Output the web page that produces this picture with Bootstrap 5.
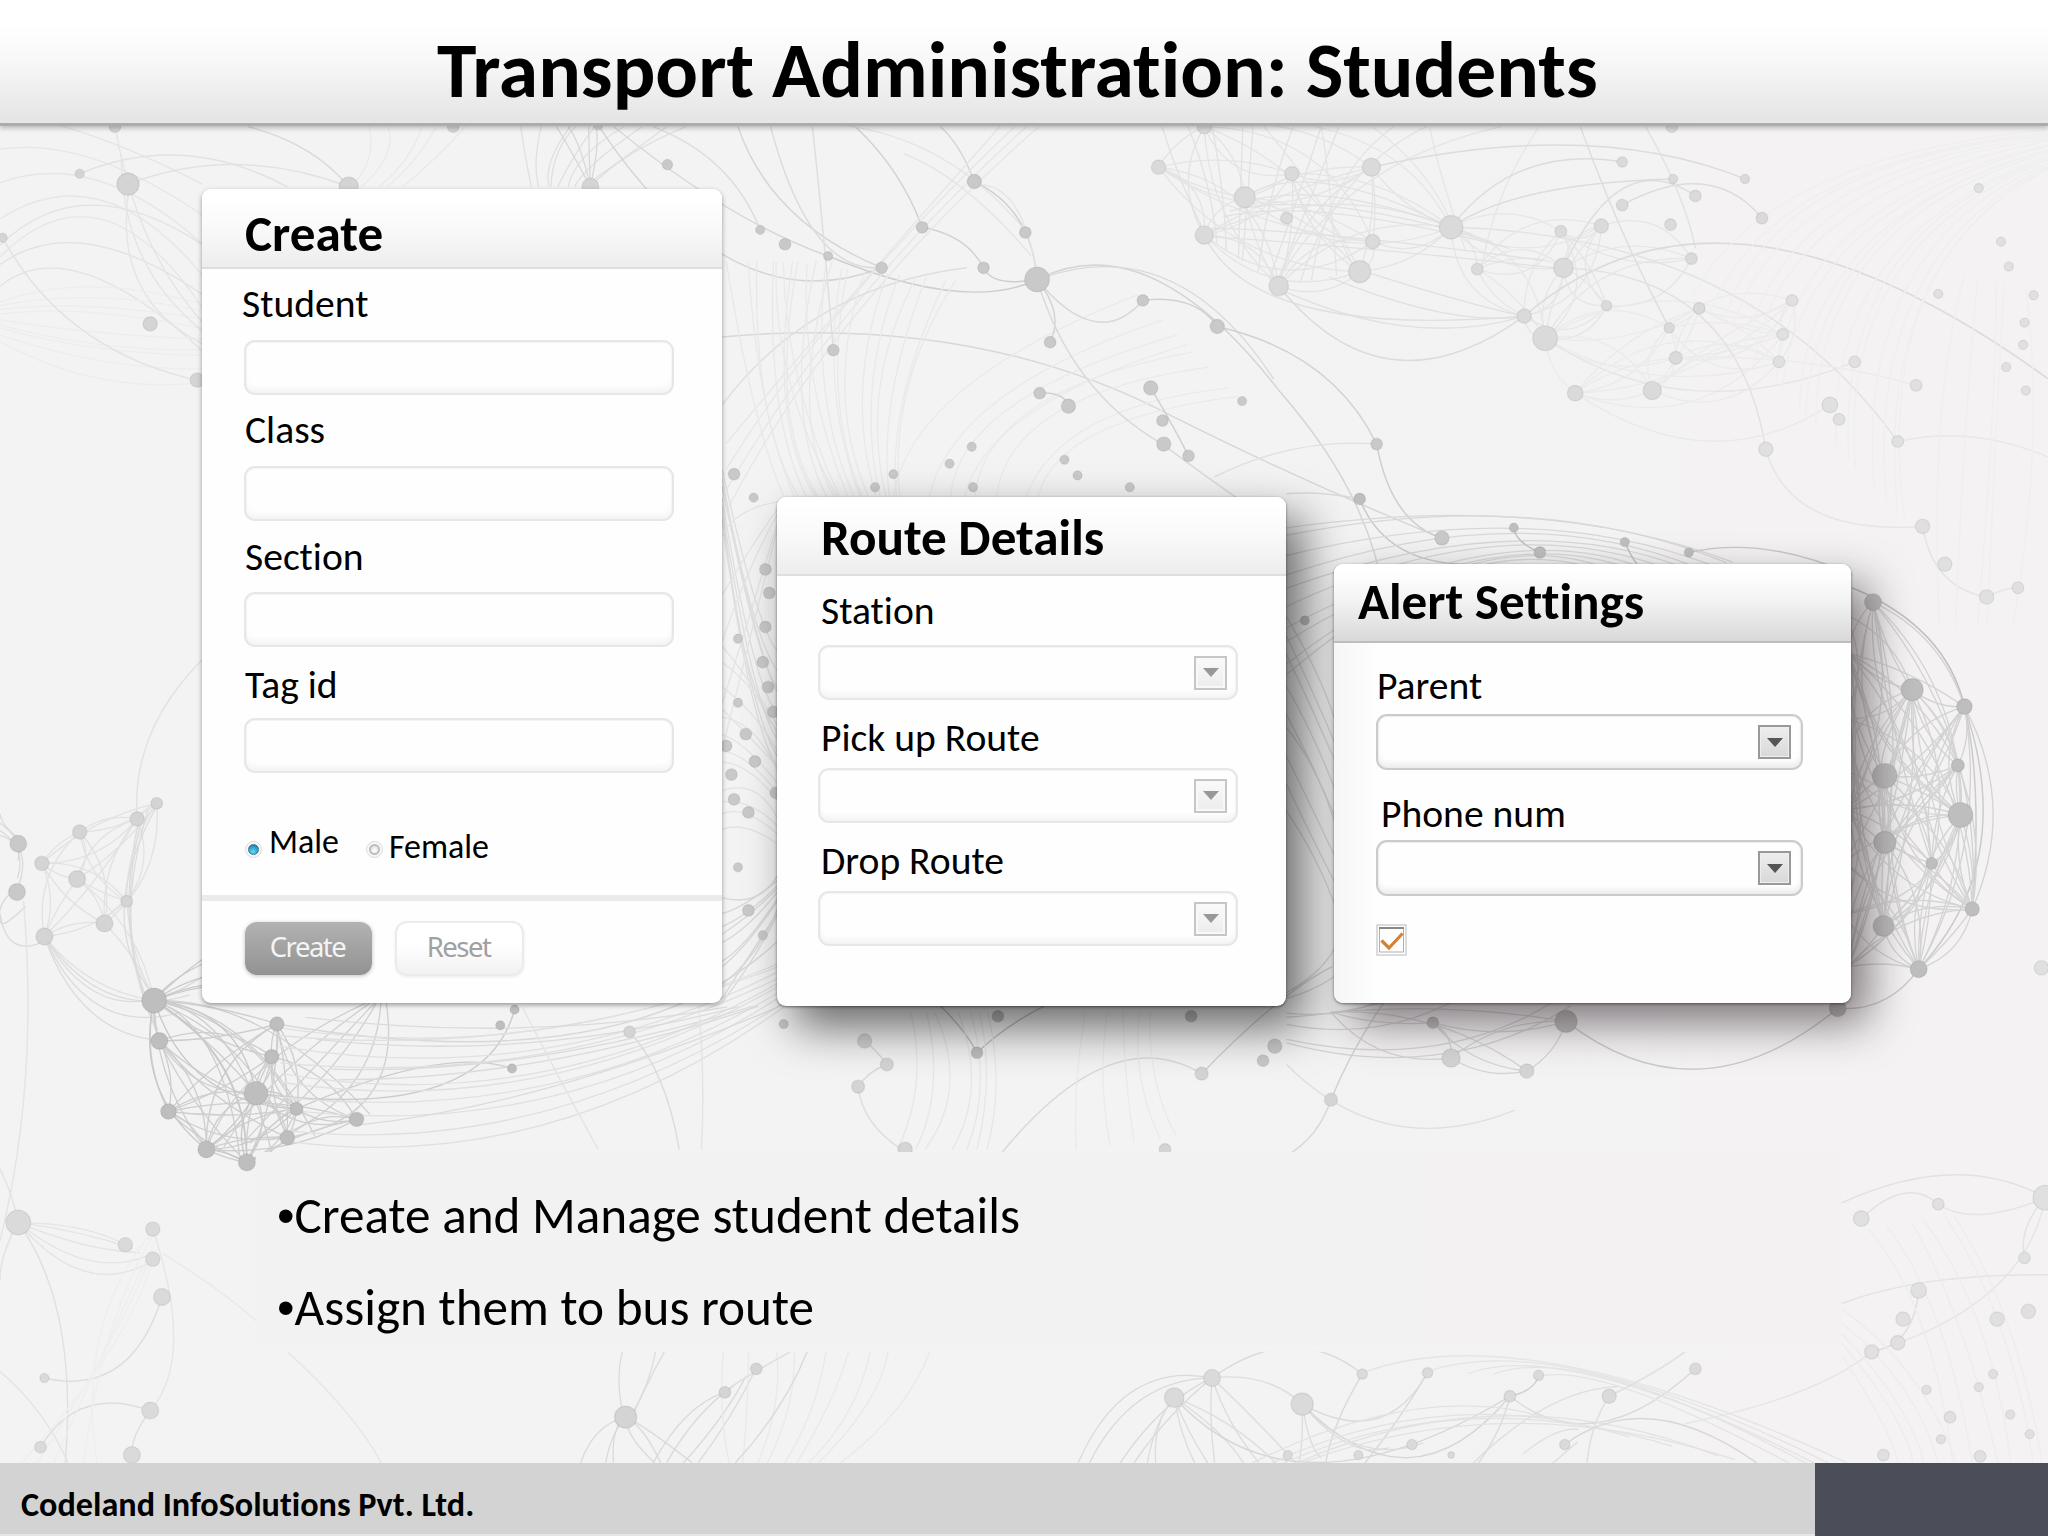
<!DOCTYPE html>
<html lang="en">
<head>
<meta charset="utf-8">
<title>Transport Administration: Students</title>
<link rel="stylesheet" href="https://cdn.jsdelivr.net/npm/bootstrap@5.3.0/dist/css/bootstrap.min.css">
<style>
body{width:2048px;height:1536px;overflow:hidden;background:linear-gradient(90deg,#f3f3f3 60%,#f4f2f3 85%);color:#000;font-family:Carlito,Calibri,Lato,sans-serif;font-variant-ligatures:none}
.backdrop{position:absolute;inset:0;width:2048px;height:1536px;z-index:-1}
.page-head{height:126px;background:linear-gradient(#fff 20%,#f8f8f8 48%,#e6e6e6 95%);border-bottom:3px solid #acacac;box-shadow:0 2px 5px rgba(0,0,0,.25);padding-left:437px}
.page-head h1{font-size:79.6px;font-weight:700;line-height:96px;padding-top:22px;white-space:nowrap}
.panels{height:877px;padding-left:202px}
.panel{background:#fefefe;border-radius:9px;flex:none}
.panel-title{font-size:51.2px;font-weight:700;line-height:60px;margin:0;white-space:nowrap;background:linear-gradient(#fff 10%,#f9f9f9 50%,#ededed);border-bottom:2px solid #dedede;border-radius:9px 9px 0 0}
.panel-create{width:520px;height:814px;box-shadow:0 2px 5px rgba(0,0,0,.38)}
.panel-create .panel-title{height:80px;padding:15px 0 0 43px}
.panel-route{width:509px;height:509px;margin-left:55px;margin-bottom:-3px;box-shadow:17px 21px 46px rgba(0,0,0,.58),0 1px 3px rgba(0,0,0,.5)}
.panel-route .panel-title{height:79px;padding:11px 0 0 44px}
.panel-alert{width:517px;height:439px;margin-left:48px;background:linear-gradient(90deg,#f6f6f6,#fefefe 9%);box-shadow:17px 20px 44px rgba(40,30,35,.58),0 1px 3px rgba(0,0,0,.5)}
.panel-alert .panel-title{height:79px;padding:8px 0 0 24px;background:linear-gradient(#fff 10%,#f4f4f4 45%,#d9d9d9);border-color:#bdbdbd}
.field-label{font-size:39.6px;line-height:48px;white-space:nowrap}
.box{height:55px;border:2px solid #e7e7e7;border-radius:11px;background:#fefefe;box-shadow:inset 0 -6px 6px -2px #f3f3f3,inset 0 0 0 1px #f5f5f5;padding:0}
.panel-create .box{width:430px}
.panel-create .fields{padding:0 0 0 42px}
.fld{height:126px}
.fld-student .field-label{margin:0 0 12px -2px}.fld-class .field-label{margin:0 0 12px 1px}.fld-section .field-label{margin:0 0 11px 1px}.fld-tag .field-label{margin:0 0 9px 1px}
.radios{height:122px;padding:52px 0 0 43px;font-size:33.9px;line-height:42px}
.radio{width:17px;height:17px;border-radius:50%;border:1px solid #dcdcdc;background:#f7f7f7;margin-top:16px;padding:2px}
.radio i{display:block;width:11px;height:11px;border-radius:50%;border:2px solid #bdbdbd;background:radial-gradient(circle at 50% 70%,#fff,#ddd)}
.radio i.on{border:1px solid #3b7189;background:radial-gradient(circle at 45% 75%,#5fdcfb,#2e9bc6 60%,#26698a)}
.lbl-male{margin-left:7px;width:97px;margin-top:-4px}.lbl-female{margin-left:6px;margin-top:1px}
.actions{border-top:6px solid #ebebeb;padding:20px 0 0 43px;gap:23px}
.btn-lite{font-family:"Noto Sans","Open Sans",sans-serif;font-size:27.5px;letter-spacing:-1.5px;line-height:45px;padding:0 2px 5px 0;border-radius:12px}
.btn-make{width:127px;height:53px;margin-top:1px;color:#f4f4f4;background:linear-gradient(#b2b2b2,#929292);border:0;box-shadow:0 1px 4px rgba(0,0,0,.25)}
.btn-clear{width:129px;height:55px;color:#a0a0a0;background:linear-gradient(#fff 40%,#f2f2f2);border:2px solid #ebebeb;box-shadow:0 1px 3px rgba(0,0,0,.08)}
.drop{width:33px;height:34px;border:2px solid #c6c6c6;background:linear-gradient(#fafafa,#ececec);box-shadow:inset 0 0 0 2px #f8f8f8}
.drop::after{content:"";border:8.5px solid transparent;border-top:9px solid #989898;border-bottom:0}
.panel-route .fields{padding:9px 0 0 41px}
.panel-route .field-label{padding-left:3px}
.panel-route .box{width:420px;padding-right:9px}
.panel-route .f1{height:115px}.panel-route .f2{height:123px}.panel-route .f3{height:123px}
.f1 .field-label{margin-bottom:10px}.f2 .field-label{margin-bottom:6px}.f3 .field-label{margin-bottom:6px}
.panel-alert .fields{padding:17px 0 0 42px}
.panel-alert .box{width:427px;height:56px;border-color:#cbcbcb;padding-right:10px;box-shadow:inset 0 -6px 6px -2px #ebebeb,inset 0 0 0 1px #ededed}
.panel-alert .drop{border-color:#999;background:linear-gradient(#eee,#d8d8d8);box-shadow:inset 0 0 0 1px #eee}
.panel-alert .drop::after{border-top-color:#555}
.a1{height:110px}.a2{height:126px}
.a1 .field-label{margin:0 0 4px 1px}.a2 .field-label{margin:0 0 2px 5px}
.tick{width:32px;height:32px;margin-top:28px}
.notes{width:1584px;height:193px;margin:149px 0 0 256px;padding:34px 0 0 21px;background:linear-gradient(90deg,#f2f2f2 60%,#f3f1f2 75%);font-size:51.2px;line-height:60px}
.notes li{height:92px;white-space:nowrap}
.dot{font-family:"Liberation Sans",sans-serif;line-height:1;font-size:50px}
.page-foot{height:73px;margin-top:118px;font-size:34.2px;font-weight:700;line-height:42px;background:#d3d3d3;border-bottom:2px solid #e6e6e6}
.page-foot .who{padding:20px 0 0 21px}
.page-foot .block{width:233px;height:73px;background:#4b4e59}
</style>
<script src="https://cdn.jsdelivr.net/npm/bootstrap@5.3.0/dist/js/bootstrap.bundle.min.js"></script>
</head>
<body class="d-flex flex-column">
<svg class="backdrop" id="net" viewBox="0 0 1568 1176" preserveAspectRatio="none" fill="none"></svg>
<header class="page-head flex-shrink-0"><h1 class="m-0">Transport Administration: Students</h1></header>
<main class="flex-shrink-0">
  <section class="panels d-flex align-items-end">
    <div class="panel panel-create">
      <h2 class="panel-title">Create</h2>
      <div class="fields">
        <div class="fld fld-student d-flex flex-column justify-content-end"><label class="field-label">Student</label><div class="box"></div></div>
        <div class="fld fld-class d-flex flex-column justify-content-end"><label class="field-label">Class</label><div class="box"></div></div>
        <div class="fld fld-section d-flex flex-column justify-content-end"><label class="field-label">Section</label><div class="box"></div></div>
        <div class="fld fld-tag d-flex flex-column justify-content-end"><label class="field-label">Tag id</label><div class="box"></div></div>
      </div>
      <div class="radios d-flex align-items-start">
        <span class="radio"><i class="on"></i></span><span class="lbl-male">Male</span>
        <span class="radio"><i></i></span><span class="lbl-female">Female</span>
      </div>
      <div class="actions d-flex align-items-start"><button class="btn btn-lite btn-make">Create</button><button class="btn btn-lite btn-clear">Reset</button></div>
    </div>
    <div class="panel panel-route">
      <h2 class="panel-title">Route Details</h2>
      <div class="fields">
        <div class="f1 d-flex flex-column justify-content-end"><label class="field-label">Station</label><div class="box d-flex align-items-center justify-content-end"><span class="drop d-flex align-items-center justify-content-center"></span></div></div>
        <div class="f2 d-flex flex-column justify-content-end"><label class="field-label">Pick up Route</label><div class="box d-flex align-items-center justify-content-end"><span class="drop d-flex align-items-center justify-content-center"></span></div></div>
        <div class="f3 d-flex flex-column justify-content-end"><label class="field-label">Drop Route</label><div class="box d-flex align-items-center justify-content-end"><span class="drop d-flex align-items-center justify-content-center"></span></div></div>
      </div>
    </div>
    <div class="panel panel-alert">
      <h2 class="panel-title">Alert Settings</h2>
      <div class="fields">
        <div class="a1 d-flex flex-column justify-content-end"><label class="field-label">Parent</label><div class="box d-flex align-items-center justify-content-end"><span class="drop d-flex align-items-center justify-content-center"></span></div></div>
        <div class="a2 d-flex flex-column justify-content-end"><label class="field-label">Phone num</label><div class="box d-flex align-items-center justify-content-end"><span class="drop d-flex align-items-center justify-content-center"></span></div></div>
        <svg class="tick d-block" viewBox="0 0 32 32"><rect x="1" y="1" width="29" height="30" fill="#fff" stroke="#d0d0d0" stroke-width="1.5"/><rect x="3.500" y="4" width="24" height="24" fill="#fdfdfd" stroke="#b0b0b0"/><path d="M3 4h25" stroke="#888" stroke-width="2"/><path d="M5.500 16.500l7.500 7.500L26.500 9.500" fill="none" stroke="#d9802f" stroke-width="3.200"/></svg>
      </div>
    </div>
  </section>
  <ul class="notes list-unstyled mb-0"><li><span class="dot">•</span>Create and Manage student details</li><li><span class="dot">•</span>Assign them to bus route</li></ul>
</main>
<footer class="page-foot flex-shrink-0 d-flex justify-content-between"><div class="who">Codeland InfoSolutions Pvt. Ltd.</div><div class="block"></div></footer>
<script>
// Decorative network: x, y, radius per node, grouped by tone
const groups = {
 '#d4d4d4': `61,133,4 98,141,9 88,97,5 347,97,5 267,143,8 452,143,7 2,182,4 115,248,6 151,291,6 458,96,4
  120,615,5 105,627,6 61,637,6 32,661,6 59,673,7 97,690,5 80,707,7 34,717,7 482,790,5 662,797,6 679,815,5.500 657,832,5.500 920,822,5.500 1019,842,5.500
  1111,810,7.500 1169,820,6 479,1085,9 579,1048,5 555,1066,5 693,880,6 892,880,5`,
 '#c9c9c9': `511,126,4.500 582,176,4 601,187,5 634,196,4 675,205,5 706,174,5 746,139,6 785,178,5 753,205,5 794,214,10 638,268,5 804,262,5 875,230,5 932,250,6
  796,301,5 818,311,6 881,297,6 890,322,5 891,340,6 910,349,5 951,307,4 815,352,4 825,364,4 865,373,4 1054,340,5 1104,412,6 744,342,4 727,355,4 684,363,4 670,373,4 745,373,4
  562,363,5 577,381,4 586,436,5 589,454,5 586,480,5 565,489,4 584,507,5 588,526,5 592,545,5 565,538,4 571,562,5 556,571,5 578,583,5 594,607,5 560,593,5 562,612,5 573,622,5 565,664,4 573,697,5 584,716,4
  600,784,4 976,801,6 967,812,5 14,646,7 13,683,7`,
 '#dadada': `922,97,6 887,128,6 953,151,8.500 989,133,6 1050,128,7.500 922,180,7.500 985,167,5 1051,185,6 979,219,8 1041,208,9 1111,174,9.500 1131,206,5 1197,205,8 1195,177,5 1226,173,6
  1242,157,5 1242,124,4.500 1281,137,4 1298,150,5 1336,137,4 1349,167,5 1279,172,5 1280,97,5 1295,198,5 1230,234,4.500 1278,251,4.500 1301,236,5 1167,242,6 1183,259,10 1206,301,6.500 1265,299,7.500
  1283,274,5.500 14,936,10 117,941,6 96,953,6 117,964,6 124,993,7 34,1055,4 115,1080,7 31,1108,5 101,1114,7
  928,1055,7 899,1070,8 997,1075,9 1043,1052,4.500 1093,1051,4.500 1178,1053,4.500 1156,1069,5 1232,1069,6 1298,1048,5 1081,1106,4.500 1198,1106,4.500 986,1114,4 1040,1114,4 1111,1114,3`,
 '#e0e0e0': `1372,230,5 1365,256,5 1362,277,5 1420,277,5 1401,310,6.500 1408,321,5 1467,295,5 1352,344,6 1453,338,5 1515,144,4 1532,185,4 1538,204,4 1484,225,4 1557,226,4 1550,247,4 1549,264,4
  1536,281,4 1551,299,4 1472,403,6 1489,432,6 1521,457,6 1545,450,5 1563,741,6 1425,933,6.500 1484,922,5 1566,917,10 1550,963,5 1469,988,6.500 1457,1010,6 1453,1028,6 1433,1035,6 1529,1010,6 1553,1004,6
  1475,1064,4 1526,1052,4 1515,1062,4 1493,1085,5 1539,1083,4 1486,1102,4 1442,1114,5 1516,1115,5 1554,1098,4`,
 '#bebebe': `118,766,10 122,797,7 212,784,6 208,809,6 196,837,9.500 129,851,6.500 227,849,5.500 273,857,6 220,871,6 158,880,7 189,890,7 394,773,4 383,785,4 392,818,4
  748,806,5 764,778,5 912,778,5 1041,382,5 1159,404,4 1179,423,5 1244,415,4 1293,423,4 999,475,4 1199,782,9 1097,783,5 1407,772,7
  1434,461,7 1464,528,9 1504,541,6.500 1443,594,10 1499,586,5.500 1501,624,10 1443,645,9 1479,661,5 1510,696,6 1442,709,8.500 1469,742,7`
};
let svg = '';
const curve = (x1,y1,cx,cy,x2,y2,c,w=1.1) => { svg += `<path d="M${x1} ${y1}Q${cx} ${cy} ${x2} ${y2}" stroke="${c}" stroke-width="${w}"/>`; };
// repeatable variation, so that neighbouring strands are not evenly spaced
let seed = 7; const rnd = () => (seed = (seed*16807)%2147483647)/2147483647;
// a family of curves blended between a first and a last curve
const bundle = (a,b,n,c,w=1) => { for (let i=0;i<n;i++){ const t=(i+rnd()*.9-.45)/(n-1); curve(...a.map((v,k)=>+(v+(b[k]-v)*t+(k>1&&k<4?rnd()*16-8:0)).toFixed(1)),c,w); } };
// arcs among nodes of a cluster
const mesh = (pts,c,bend,limit) => { const p=pts.split(' ').map(s=>s.split(',').map(Number));
 p.forEach((a,i)=>p.forEach((b,j)=>{ if(j<=i) return; const dx=b[0]-a[0],dy=b[1]-a[1]; if(Math.hypot(dx,dy)>limit) return; const s=((i+j)%2?1:-1)*bend*(.3+rnd()*1.3);
 curve(a[0],a[1],+((a[0]+b[0])/2-dy*s).toFixed(1),+((a[1]+b[1])/2+dx*s).toFixed(1),b[0],b[1],c,1); })); };

bundle([0,97,60,100,155,150],[0,190,80,120,155,230],5,'#e6e6e6');
bundle([0,185,60,130,155,180],[0,215,60,170,155,258],3,'#e2e2e2');
bundle([0,230,60,200,155,230],[0,260,80,300,155,290],9,'#ededed');
bundle([98,141,85,220,155,262],[88,97,110,190,155,245],3,'#e4e4e4');
curve(2,182,50,270,155,292,'#e2e2e2'); curve(61,133,140,100,220,143,'#e2e2e2'); curve(98,141,180,110,267,143,'#e2e2e2');
curve(190,97,240,110,267,143,'#dadada'); bundle([285,97,290,120,270,143],[350,97,330,120,305,143],5,'#eaeaea');
bundle([402,97,402,120,408,143],[520,97,470,120,450,143],9,'#e0e0e0');
bundle([430,97,440,115,452,143],[458,97,455,110,452,143],4,'#d8d8d8');
curve(458,96,560,250,675,205,'#d4d4d4'); curve(470,97,560,170,634,196,'#d8d8d8'); curve(500,97,560,120,582,176,'#dcdcdc');
curve(565,97,590,170,675,205,'#d6d6d6'); curve(590,97,620,210,675,205,'#dcdcdc'); curve(622,97,630,170,638,268,'#dedede'); curve(655,97,690,130,706,174,'#d2d2d2');
curve(720,97,735,110,746,139,'#d6d6d6'); curve(746,139,790,160,794,214,'#cecece'); curve(706,174,740,180,753,205,'#d2d2d2'); curve(634,196,740,240,794,214,'#cecece'); curve(753,205,760,220,794,214,'#cecece');
bundle([640,97,720,110,785,178],[746,139,775,150,794,214],3,'#e4e4e4');
bundle([556,400,640,230,800,97],[556,330,640,230,760,97],4,'#e6e6e6');
curve(553,258,750,240,900,320,'#d8d8d8'); curve(900,320,1000,370,1104,412,'#d6d6d6'); curve(553,310,620,220,740,205,'#dedede');
bundle([592,200,590,300,640,380],[735,215,680,300,690,380],13,'#e9e9e9');
bundle([556,200,575,320,600,380],[640,200,600,320,640,380],8,'#e8e8e8');
bundle([690,380,700,290,875,230],[800,380,820,320,951,307],8,'#eaeaea');
curve(794,214,880,170,980,300,'#d4d4d4'); curve(980,300,1050,380,1060,460,'#d4d4d4'); curve(794,214,900,175,975,290,'#dadada');
curve(794,214,840,270,875,230,'#d8d8d8'); curve(875,230,915,225,932,250,'#d1d1d1'); curve(932,250,1020,270,1054,340,'#d1d1d1'); curve(794,214,815,240,804,262,'#d4d4d4'); curve(794,214,820,300,890,340,'#dadada'); curve(890,340,930,370,960,390,'#dadada');
curve(1054,340,1065,400,1104,412,'#cecece'); curve(1041,382,1060,430,1120,432,'#cacaca'); curve(930,365,990,335,1054,340,'#e0e0e0'); curve(985,378,1010,376,1041,382,'#dadada');
curve(881,297,895,320,910,349,'#d0d0d0'); curve(796,301,815,300,818,311,'#d0d0d0');
// upper right
mesh('922,97 887,128 953,151 989,133 1050,128 922,180 1051,185 979,219 1041,208 1111,174','#e4e4e4',.25,200);
mesh('1111,174 1197,205 1195,177 1226,173 1131,206 1167,242 1230,234 1295,198 1183,259','#e6e6e6',.3,130);
mesh('1183,259 1206,301 1265,299 1283,274 1278,251 1301,236 1365,256 1362,277 1372,230','#ebebeb',.25,190);
bundle([885,97,905,140,922,180],[1030,97,1000,160,979,219],8,'#e2e2e2');
bundle([960,97,1010,140,1041,208],[1140,97,1020,120,979,219],5,'#e4e4e4');
bundle([1020,97,1080,120,1111,174],[1160,97,1130,140,1131,206],4,'#e6e6e6');
bundle([953,151,1010,130,1111,174],[922,180,1010,180,1197,205],6,'#e1e1e1');
curve(1111,174,1160,110,1242,124,'#dcdcdc'); curve(1111,174,1160,140,1281,137,'#dcdcdc'); curve(1050,128,1220,90,1336,137,'#dcdcdc'); curve(1197,205,1240,110,1298,150,'#dedede'); curve(1242,157,1310,120,1349,167,'#dcdcdc'); curve(1210,97,1240,180,1278,251,'#dedede'); curve(1260,97,1290,150,1298,190,'#e2e2e2');
curve(922,180,960,260,1167,242,'#e0e0e0'); curve(979,219,1060,320,1167,242,'#dcdcdc'); bundle([979,219,1080,260,1167,242],[1041,208,1120,240,1167,242],3,'#e0e0e0');
curve(1167,242,1320,110,1568,290,'#dcdcdc',1.3); curve(1111,174,1340,180,1453,338,'#e2e2e2'); curve(1197,205,1330,210,1352,344,'#e2e2e2'); curve(1352,344,1370,410,1472,403,'#e6e6e6'); curve(1453,338,1510,325,1568,350,'#e8e8e8'); curve(1206,301,1310,370,1401,310,'#eaeaea');
curve(1183,259,1290,330,1420,277,'#e6e6e6'); curve(1283,274,1380,270,1467,295,'#ececec'); curve(1472,403,1480,450,1521,457,'#e4e4e4'); curve(1521,457,1535,450,1545,450,'#e6e6e6');
bundle([1300,230,1350,120,1568,100],[1460,400,1430,200,1568,130],18,'#efefef');
bundle([1480,480,1475,300,1500,210],[1540,480,1560,330,1550,220],5,'#efefef');
// around the right-hand panels
bundle([985,400,1180,370,1330,430],[985,520,1130,400,1230,440],10,'#d8d8d8');
bundle([985,470,1010,520,1025,560],[985,620,1005,650,1025,700],9,'#d8d8d8');
bundle([985,760,1010,740,1025,720],[985,800,1110,830,1210,772],7,'#d4d4d4');
curve(1159,404,1160,415,1179,423,'#c0c0c0'); curve(1244,415,1250,430,1260,440,'#c0c0c0'); curve(1293,423,1350,410,1418,440,'#c8c8c8');
curve(1418,450,1490,480,1504,541,'#c2c2c2',1.3); curve(1504,541,1518,600,1510,696,'#cacaca'); curve(1504,541,1545,660,1469,742,'#cacaca'); curve(1469,742,1445,775,1407,772,'#cacaca'); curve(1199,782,1300,860,1407,772,'#cacaca');
mesh('1434,461 1464,528 1504,541 1443,594 1499,586 1501,624 1443,645 1479,661 1510,696 1442,709 1469,742 1415,500 1415,620 1415,740','#d3d3d3',.16,260);
mesh('1412,470 1412,550 1412,590 1412,660 1412,700 1464,528 1501,624 1510,696 1469,742','#d5d5d5',-.2,190);
mesh('1097,783 1199,782 1111,810 1169,820 1019,775','#d4d4d4',.2,200);
curve(1019,842,1040,790,1080,740,'#d0d0d0'); curve(985,885,1010,870,1019,842,'#d8d8d8'); curve(920,822,980,760,1020,740,'#d0d0d0'); curve(765,885,850,780,920,822,'#d9d9d9'); curve(720,770,740,790,748,806,'#c4c4c4'); curve(748,806,770,785,800,770,'#c4c4c4'); curve(662,797,672,805,679,815,'#d6d6d6'); curve(679,815,665,820,657,832,'#dadada'); curve(657,832,660,860,690,880,'#dedede'); curve(985,815,1060,890,1160,850,'#dfdfdf');
bundle([690,880,720,830,700,775],[760,880,780,830,760,775],7,'#e6e6e6'); bundle([830,880,830,830,835,775],[900,870,880,830,880,775],5,'#eaeaea');
// gap between the first two panels
bundle([553,360,580,480,596,500],[553,400,570,560,596,590],9,'#dedede');
bundle([553,500,575,520,596,560],[553,640,575,630,596,650],12,'#e3e3e3');
bundle([553,690,575,690,596,670],[553,770,580,740,596,700],10,'#d8d8d8');
bundle([553,420,570,400,596,385],[553,560,575,470,596,400],5,'#e4e4e4');
// lower left
mesh('120,615 105,627 61,637 32,661 59,673 97,690 80,707 34,717 118,766','#e2e2e2',.2,130);
bundle([14,646,10,630,0,625],[13,683,20,650,0,640],4,'#dadada'); bundle([13,683,5,700,0,705],[34,717,10,740,0,700],3,'#dadada');
curve(0,950,30,830,18,690,'#e4e4e4'); curve(105,627,100,560,155,505,'#e2e2e2'); bundle([120,615,70,700,118,766],[105,627,90,720,122,797],4,'#dcdcdc');
bundle([34,717,60,790,122,797],[34,717,80,790,160,740],4,'#dcdcdc');
mesh('118,766 122,797 212,784 208,809 196,837 129,851 227,849 273,857 220,871 158,880 189,890','#cecece',.2,150);
mesh('118,766 196,837 158,880 189,890 227,849','#c8c8c8',-.25,150);
bundle([118,766,130,740,160,725],[118,766,180,745,240,765],5,'#cacaca'); bundle([118,766,200,760,273,857],[118,766,170,780,189,890],4,'#cecece');
bundle([158,880,180,810,280,768],[220,871,310,850,295,768],6,'#d0d0d0');
curve(227,849,340,800,392,818,'#cccccc'); curve(196,837,370,860,394,773,'#cccccc'); curve(212,784,480,830,596,720,'#d8d8d8');
bundle([212,784,420,810,600,735],[220,871,420,900,600,770],10,'#e0e0e0');
bundle([230,771,400,790,553,771],[273,857,420,850,596,770],5,'#dbdbdb');
curve(482,790,510,820,520,880,'#dcdcdc'); curve(400,771,430,830,458,880,'#e4e4e4'); curve(535,770,540,830,537,880,'#e4e4e4');
// bottom left
bundle([14,936,60,925,96,953],[14,936,60,990,117,964],5,'#e4e4e4'); curve(14,936,60,1000,50,1120,'#e0e0e0'); curve(14,936,0,960,0,980,'#e2e2e2'); curve(0,895,10,915,14,936,'#e2e2e2'); curve(124,993,100,1070,34,1055,'#dedede'); curve(117,941,150,1040,115,1080,'#e6e6e6'); curve(31,1108,60,1060,115,1080,'#dedede'); curve(115,1080,100,1100,101,1114,'#dedede'); bundle([117,941,60,1010,80,1120],[117,964,110,1030,10,1120],5,'#eeeeee'); curve(125,960,190,1000,220,1035,'#e9e9e9'); curve(220,1035,270,1080,292,1120,'#e6e6e6'); curve(0,1050,35,1080,52,1120,'#e4e4e4');
bundle([483,1035,480,1060,479,1085],[515,1035,500,1070,485,1085],3,'#dcdcdc'); bundle([479,1085,445,1090,438,1120],[479,1085,500,1095,530,1120],6,'#dadada'); bundle([555,1066,520,1070,500,1120],[579,1048,560,1090,535,1120],4,'#dadada'); bundle([557,1035,560,1080,560,1120],[705,1035,690,1080,640,1120],9,'#e9e9e9'); curve(618,1035,600,1080,563,1120,'#dadada'); curve(605,1035,560,1060,555,1066,'#dedede');
// bottom right
bundle([928,1055,860,1040,825,1120],[928,1055,900,1090,875,1120],4,'#dadada'); bundle([899,1070,880,1090,870,1120],[899,1070,940,1090,970,1120],6,'#dcdcdc'); bundle([928,1055,930,1080,930,1120],[928,1055,950,1090,990,1120],3,'#dcdcdc');
curve(928,1055,990,1010,1043,1052,'#dadada'); curve(899,1070,990,1170,1156,1069,'#d6d6d6'); curve(997,1075,1080,1160,1156,1069,'#d6d6d6'); curve(997,1075,1060,1110,1093,1051,'#dadada'); curve(1156,1069,1175,1065,1178,1053,'#d0d0d0'); curve(1156,1069,1220,1120,1298,1048,'#dadada'); curve(1043,1052,1020,1090,1015,1120,'#dadada'); curve(1093,1051,1070,1090,1045,1120,'#dadada'); curve(928,1055,970,1050,997,1075,'#dedede');
bundle([997,1075,990,1100,985,1120],[997,1075,1040,1120,1081,1106],4,'#dcdcdc'); bundle([960,1120,1090,1050,1200,1090],[1000,1120,1160,1060,1340,1120],5,'#e2e2e2'); bundle([1060,1050,1180,1005,1410,1120],[1180,1053,1230,1040,1370,1120],5,'#e4e4e4'); curve(1198,1106,1260,1060,1345,1120,'#d8d8d8'); bundle([1135,1120,1180,1070,1232,1069],[1198,1106,1190,1110,1185,1120],3,'#dedede'); curve(1232,1069,1270,1050,1290,1035,'#dfdfdf'); curve(1156,1069,1150,1095,1132,1120,'#dcdcdc'); curve(1232,1069,1218,1090,1215,1120,'#dfdfdf');
curve(1410,921,1500,880,1566,917,'#e2e2e2'); curve(1425,933,1460,900,1484,922,'#e2e2e2'); curve(1484,922,1510,940,1566,917,'#e4e4e4'); curve(1566,917,1550,1000,1433,1035,'#e6e6e6'); curve(1410,998,1470,975,1568,976,'#e4e4e4'); curve(1469,988,1465,1030,1433,1035,'#dfdfdf'); curve(1433,1035,1390,1070,1290,1090,'#e6e6e6'); curve(1566,917,1545,940,1550,963,'#e2e2e2');
bundle([1435,940,1480,1000,1500,1120],[1500,930,1550,1000,1568,1120],6,'#eeecee'); bundle([1410,1000,1480,1050,1500,1120],[1410,1040,1440,1090,1450,1120],5,'#eeecee');

for (const [tone, list] of Object.entries(groups)) for (const n of list.trim().split(/\s+/)) { const [x,y,r]=n.split(','); svg += `<circle cx="${x}" cy="${y}" r="${r-.5}" fill="${tone}" stroke="#000" stroke-opacity=".07"/>`; }
// plain ground behind the notes
svg += '<rect x="196" y="882" width="1213" height="153" fill="#f3f3f3"/>';
document.getElementById('net').innerHTML = svg;
</script>
</body>
</html>
